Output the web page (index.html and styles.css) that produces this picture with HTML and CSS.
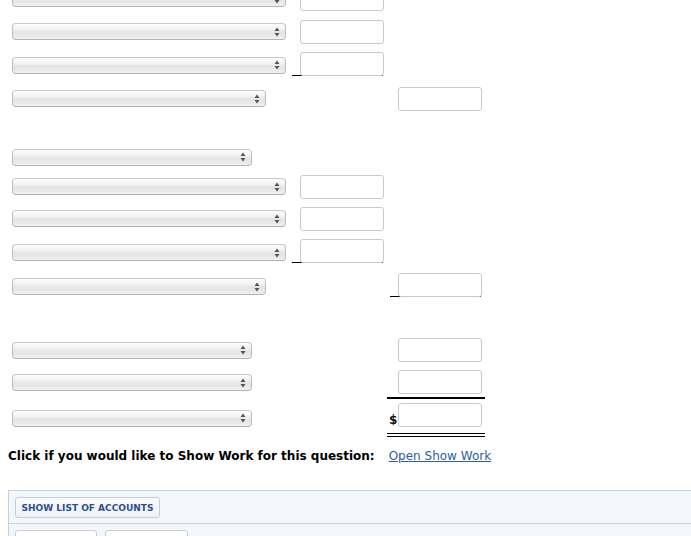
FILE: index.html
```html
<!DOCTYPE html>
<html>
<head>
<meta charset="utf-8">
<link rel="stylesheet" href="styles.css">
</head>
<body>
<div class="journal">
  <div class="row r1"><div class="sel w"><svg class="arr" width="6" height="10" viewBox="0 0 6 10"><path d="M3 0.5L5.5 4H0.5Z M3 9.5L5.5 6H0.5Z"/></svg></div><div class="c2"><input class="box" type="text"></div><div></div></div>
  <div class="row r2"><div class="sel w"><svg class="arr" width="6" height="10" viewBox="0 0 6 10"><path d="M3 0.5L5.5 4H0.5Z M3 9.5L5.5 6H0.5Z"/></svg></div><div class="c2"><input class="box" type="text"></div><div></div></div>
  <div class="row r3"><div class="sel w"><svg class="arr" width="6" height="10" viewBox="0 0 6 10"><path d="M3 0.5L5.5 4H0.5Z M3 9.5L5.5 6H0.5Z"/></svg></div><div class="c2 ul"><input class="box" type="text"></div><div></div></div>
  <div class="row r4"><div class="sel m"><svg class="arr" width="6" height="10" viewBox="0 0 6 10"><path d="M3 0.5L5.5 4H0.5Z M3 9.5L5.5 6H0.5Z"/></svg></div><div></div><div class="c3"><input class="box" type="text"></div></div>

  <div class="gap g1"></div>

  <div class="row r5"><div class="sel n"><svg class="arr" width="6" height="10" viewBox="0 0 6 10"><path d="M3 0.5L5.5 4H0.5Z M3 9.5L5.5 6H0.5Z"/></svg></div><div></div><div></div></div>
  <div class="row r6"><div class="sel w"><svg class="arr" width="6" height="10" viewBox="0 0 6 10"><path d="M3 0.5L5.5 4H0.5Z M3 9.5L5.5 6H0.5Z"/></svg></div><div class="c2"><input class="box" type="text"></div><div></div></div>
  <div class="row r7"><div class="sel w"><svg class="arr" width="6" height="10" viewBox="0 0 6 10"><path d="M3 0.5L5.5 4H0.5Z M3 9.5L5.5 6H0.5Z"/></svg></div><div class="c2"><input class="box" type="text"></div><div></div></div>
  <div class="row r8"><div class="sel w"><svg class="arr" width="6" height="10" viewBox="0 0 6 10"><path d="M3 0.5L5.5 4H0.5Z M3 9.5L5.5 6H0.5Z"/></svg></div><div class="c2 ul"><input class="box" type="text"></div><div></div></div>
  <div class="row r9"><div class="sel m"><svg class="arr" width="6" height="10" viewBox="0 0 6 10"><path d="M3 0.5L5.5 4H0.5Z M3 9.5L5.5 6H0.5Z"/></svg></div><div></div><div class="c3 ul"><input class="box" type="text"></div></div>

  <div class="gap g2"></div>

  <div class="row r10"><div class="sel n"><svg class="arr" width="6" height="10" viewBox="0 0 6 10"><path d="M3 0.5L5.5 4H0.5Z M3 9.5L5.5 6H0.5Z"/></svg></div><div></div><div class="tot"><input class="box" type="text"></div></div>
  <div class="row r11"><div class="sel n"><svg class="arr" width="6" height="10" viewBox="0 0 6 10"><path d="M3 0.5L5.5 4H0.5Z M3 9.5L5.5 6H0.5Z"/></svg></div><div></div><div class="tot single"><input class="box" type="text"></div></div>
  <div class="row r12"><div class="sel n"><svg class="arr" width="6" height="10" viewBox="0 0 6 10"><path d="M3 0.5L5.5 4H0.5Z M3 9.5L5.5 6H0.5Z"/></svg></div><div></div><div class="tot double"><span class="dollar">$</span><input class="box" type="text"></div></div>
</div>

<p class="showwork"><b>Click if you would like to Show Work for this question:</b><a class="link" href="#">Open Show Work</a></p>

<div class="panel">
  <div class="bar"><button class="btn" type="button">SHOW LIST OF ACCOUNTS</button></div>
  <div class="bar2"><span class="tab"></span><span class="tab t2"></span></div>
</div>
</body>
</html>
```

FILE: styles.css
```css
html {
  margin: 0;
  padding: 0;
  overflow: hidden;
  background: #fff;
}
body {
  margin: 0 0 0 8px;
  font-family: "DejaVu Sans", Verdana, sans-serif;
  font-size: 12px;
  color: #000;
}
.row {
  display: grid;
  grid-template-columns: 284px 95px 98px;
  align-items: center;
}
.r1 {
  height: 15px;
  align-items: start;
}
.r1 .sel { margin-top: -10px; }
.r1 .c2 { margin-top: -13px; }
.r2 { height: 33px; }
.r3 { height: 34px; }
.r4 { height: 33px; }
.g1 { height: 27px; }
.r5 { height: 30px; }
.r6 { height: 29px; }
.r7 { height: 35px; }
.r8 { height: 33px; }
.r9 { height: 35px; }
.g2 { height: 30px; }
.r10 { height: 32px; }
.r11 { height: 33px; }
.r12 { height: 38px; }

.sel {
  margin-left: 4px;
  height: 17px;
  box-sizing: border-box;
  border: 1px solid #bdbdbd;
  border-top-color: #c9c9c9;
  border-bottom-color: #b3b3b3;
  border-radius: 4px;
  background: linear-gradient(#fdfdfd 0%, #f2f2f2 35%, #e4e4e4 55%, #eaeaea 85%, #f3f3f3 100%);
  display: flex;
  align-items: center;
  justify-content: flex-end;
  padding-right: 5px;
}
.sel.w { width: 274px; }
.sel.m { width: 254px; }
.sel.n { width: 240px; }
.arr { display: block; fill: #555; }

.box {
  display: block;
  width: 84px;
  height: 24px;
  box-sizing: border-box;
  margin: 0;
  padding: 0;
  border: 1px solid #c9c9c9;
  border-radius: 3px;
  background: #fff;
  position: relative;
}
.c2 {
  width: 91px;
  padding-left: 8px;
  box-sizing: border-box;
}
.c3 {
  width: 91px;
  margin-left: 3px;
  padding-left: 8px;
  box-sizing: border-box;
}
.ul {
  border-bottom: 1px solid #000;
  margin-bottom: 3px;
}
.ul .box { margin-bottom: -1px; }

.tot {
  width: 98px;
  box-sizing: border-box;
  padding-left: 11px;
  display: flex;
  align-items: center;
  position: relative;
}
.single {
  align-self: end;
  border-bottom: 2px solid #000;
  padding-bottom: 3px;
}
.double {
  align-self: end;
  border-bottom: 4px double #000;
  padding-bottom: 6px;
  padding-left: 2px;
}
.dollar {
  width: 9px;
  font-size: 12px;
  font-weight: bold;
  color: #111;
  margin-top: 11px;
}

.showwork {
  margin: 12px 0 0 0;
  line-height: 15px;
  font-size: 12px;
}
.showwork b { font-weight: bold; }
.link {
  margin-left: 14px;
  color: #2b5ea7;
  text-decoration: underline;
}

.panel {
  margin-top: 26px;
  background: #f3f7fb;
  border-top: 1px solid #c8d0dc;
  border-left: 1px solid #c8d0dc;
}
.bar {
  padding: 6px 6px 5px 6px;
  border-bottom: 1px solid #c8d0dc;
}
.btn {
  display: block;
  height: 21px;
  width: 145px;
  margin: 0;
  padding: 0;
  border: 1px solid #c5ccd6;
  border-radius: 3px;
  background: linear-gradient(#f9fbfd, #eef2f7);
  font-family: "DejaVu Sans", Verdana, sans-serif;
  font-size: 9px;
  font-weight: bold;
  color: #2d4f8f;
  white-space: nowrap;
}
.bar2 {
  display: flex;
  gap: 8px;
  padding: 6px 6px 0 6px;
}
.tab {
  display: block;
  width: 82px;
  height: 24px;
  box-sizing: border-box;
  border: 1px solid #c5ccd6;
  border-radius: 3px;
  background: #fff;
}
.t2 { width: 83px; }
```
